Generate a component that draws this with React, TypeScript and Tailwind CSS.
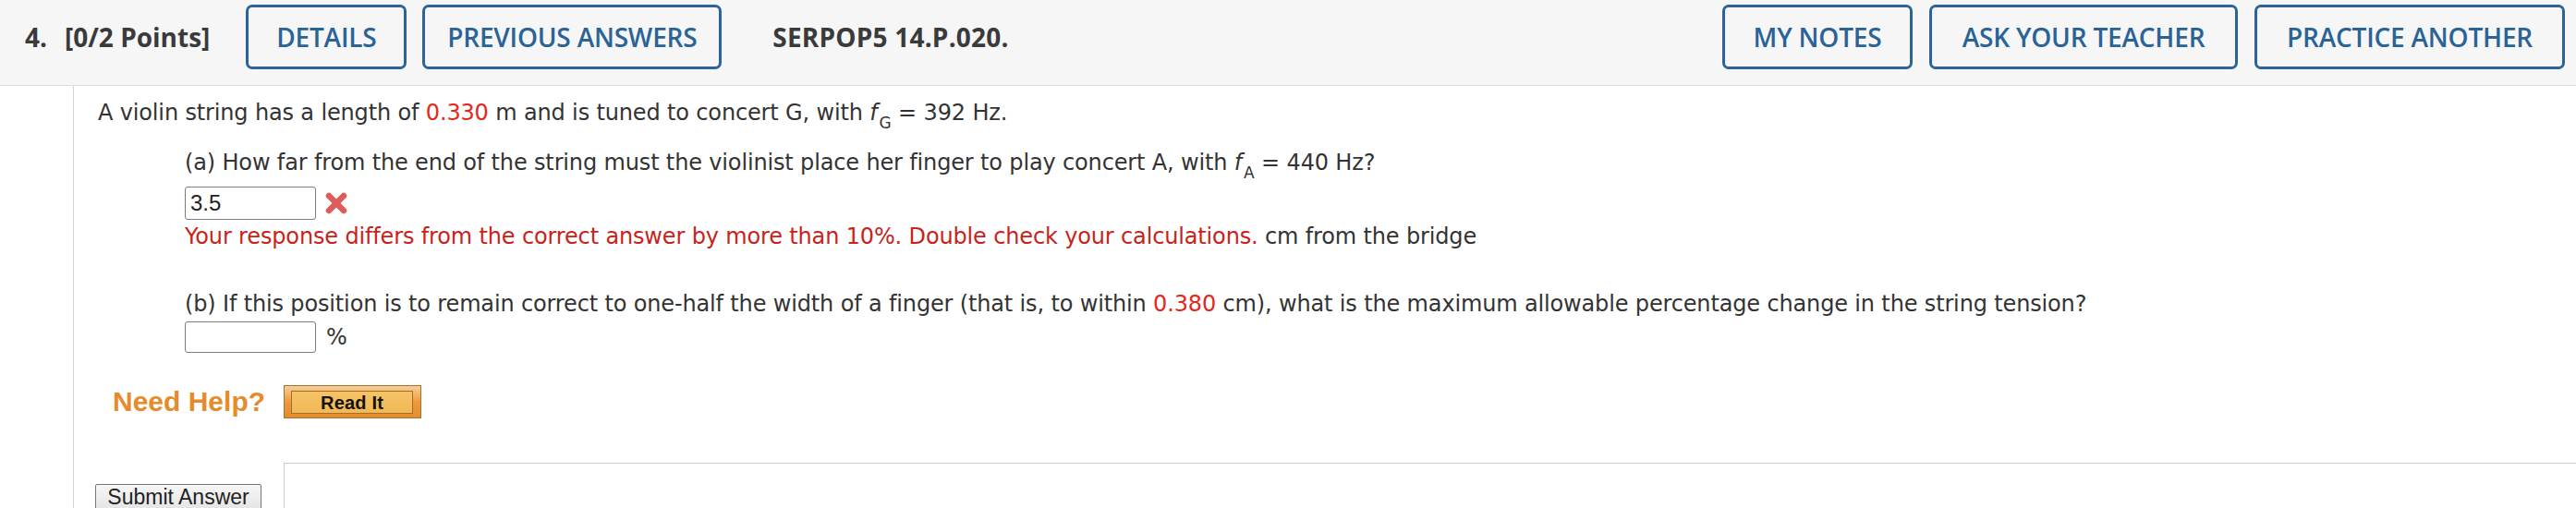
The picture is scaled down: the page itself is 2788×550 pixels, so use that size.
const headerBtn =
  'h-[70px] shrink-0 rounded-[7px] border-[3px] border-[#2c6399] bg-transparent text-[28px] font-semibold tracking-[-0.2px] text-[#2a6396]'

function Header() {
  return (
    <div className="flex h-[93px] items-start border-b border-[#dcdcdc] bg-[#f6f6f6] pt-[5px] pr-[12px] font-['Open_Sans',sans-serif]">
      <div className="flex h-[70px] items-center text-[#3a3a3a]">
        <span className="ml-[27px] w-[43px] text-[28px] font-bold">4.</span>
        <span className="text-[28px] font-bold">[0/2 Points]</span>
        <button className={headerBtn + ' ml-[39px] w-[174px]'}>DETAILS</button>
        <button className={headerBtn + ' ml-[17px] w-[324px]'}>PREVIOUS ANSWERS</button>
        <span className="ml-[55px] text-[28px] font-bold tracking-[0.2px]">SERPOP5 14.P.020.</span>
      </div>
      <div className="ml-auto flex h-[70px] items-center gap-[18px]">
        <button className={headerBtn + ' w-[206px]'}>MY NOTES</button>
        <button className={headerBtn + ' w-[334px]'}>ASK YOUR TEACHER</button>
        <button className={headerBtn + ' w-[336px]'}>PRACTICE ANOTHER</button>
      </div>
    </div>
  )
}

function WrongMark() {
  return (
    <svg width="24" height="24" viewBox="0 0 24 24" className="ml-[10px]">
      <path d="M4 4 L20 20 M20 4 L4 20" stroke="#e25b5b" strokeWidth="6.5" strokeLinecap="round" />
    </svg>
  )
}

function ReadIt() {
  return (
    <div className="ml-[20px] h-[36px] w-[149px] border border-[#a8712f] bg-gradient-to-b from-[#f8cf96] via-[#eb9a3c] to-[#e48d2c] pt-[5px] pr-[8px] pb-[4px] pl-[7px]">
      <div className="flex h-[25px] items-center justify-center border border-[#a46d2c] bg-gradient-to-b from-[#f5c366] to-[#f0b955] font-['Liberation_Sans',Arial,sans-serif] text-[20px] font-bold tracking-[0.2px] text-[#15120d]">
        Read It
      </div>
    </div>
  )
}

export default function App() {
  return (
    <div className="h-[550px] w-[2788px] overflow-hidden bg-white">
      <Header />
      <div className="flex">
        <div className="w-[79px] shrink-0" />
        <div className="h-[457px] flex-1 border-l border-[#d4d4d4]">
          <div className="pt-[13px] pl-[26px] font-['DejaVu_Sans',Verdana,sans-serif] text-[24px] leading-[32px] tracking-[-0.15px] text-[#333333]">
            <p>
              A violin string has a length of <span className="text-[#e3281d]">0.330</span> m and is tuned to concert G, with{' '}
              <i>f</i>
              <span className="relative top-[9px] ml-[2px] text-[17px] leading-[0]">G</span> = 392 Hz.
            </p>
            <div className="mt-[22px] pl-[94px]">
              <p>
                (a) How far from the end of the string must the violinist place her finger to play concert A, with{' '}
                <i>f</i>
                <span className="relative top-[9px] ml-[2px] text-[17px] leading-[0]">A</span> = 440 Hz?
              </p>
              <div className="mt-[10px] flex h-[36px] items-center">
                <div className="flex h-[36px] w-[142px] items-center rounded-[3px] border border-[#7c7c7c] px-[5px] font-['Liberation_Sans',Arial,sans-serif] text-[24px] tracking-normal text-[#222]">
                  3.5
                </div>
                <WrongMark />
              </div>
              <p className="mt-[2px] text-[#c8231b]">
                Your response differs from the correct answer by more than 10%. Double check your calculations.{' '}
                <span className="text-[#333333]">cm from the bridge</span>
              </p>
              <p className="mt-[41px]">
                (b) If this position is to remain correct to one-half the width of a finger (that is, to within{' '}
                <span className="text-[#e3281d]">0.380</span> cm), what is the maximum allowable percentage change in the string tension?
              </p>
              <div className="mt-[3px] flex h-[34px] items-center">
                <div className="h-[34px] w-[142px] rounded-[3px] border border-[#7c7c7c]" />
                <span className="ml-[11px]">%</span>
              </div>
            </div>
            <div className="mt-[35px] ml-[16px] flex h-[36px] items-center tracking-normal">
              <span className="font-['Liberation_Sans',Arial,sans-serif] text-[30px] font-bold text-[#e68b2c]">Need Help?</span>
              <ReadIt />
            </div>
          </div>
          <div className="mt-[48px] flex items-start">
            <button className="mt-[23px] ml-[23px] flex h-[40px] w-[180px] shrink-0 items-start justify-center rounded-[2px] border border-[#767676] bg-gradient-to-b from-[#f7f7f7] to-[#dcdcdc] font-['Liberation_Sans',Arial,sans-serif] text-[23px] leading-[26px] text-[#222]">
              Submit Answer
            </button>
            <div className="ml-[24px] h-[60px] flex-1 border-t border-l border-[#cccccc]" />
          </div>
        </div>
      </div>
    </div>
  )
}
